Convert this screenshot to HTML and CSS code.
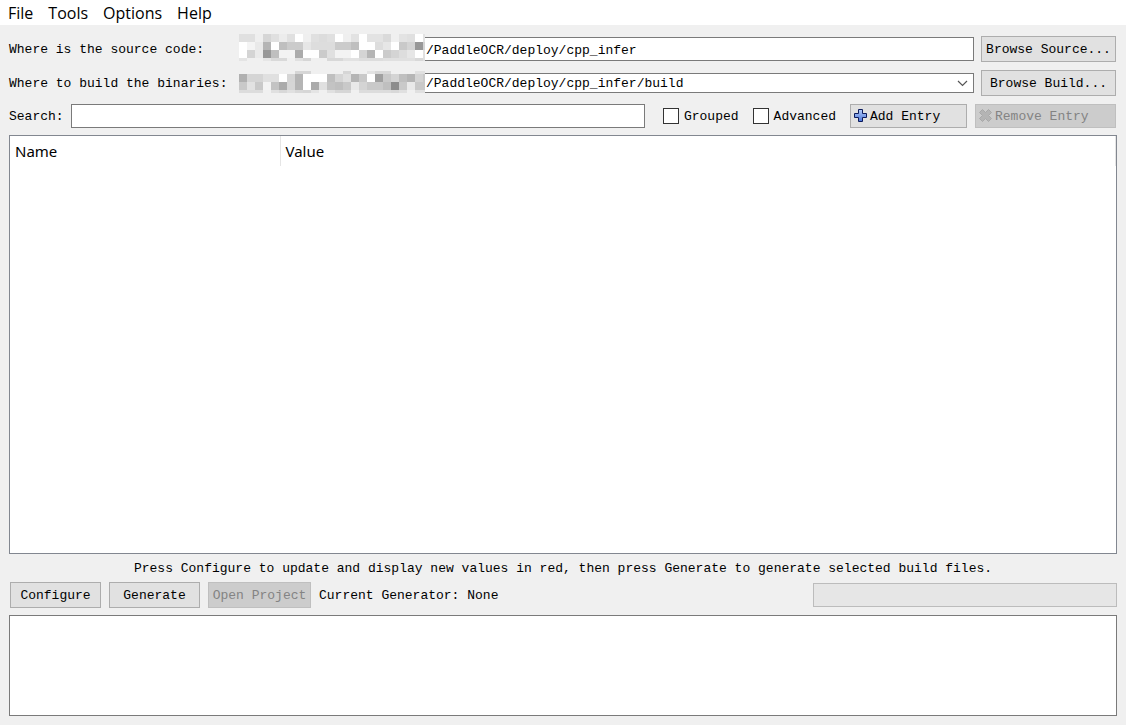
FILE: index.html
```
<!DOCTYPE html>
<html lang="en">
<head>
    <meta charset="UTF-8">
    <meta name="viewport" content="width=device-width, initial-scale=1.0">
    <title>CMake</title>
    <link rel="stylesheet" href="styles.css">
</head>
<body>
    <nav class="menubar">
        <button class="menu" type="button">File</button>
        <button class="menu" type="button">Tools</button>
        <button class="menu" type="button">Options</button>
        <button class="menu" type="button">Help</button>
    </nav>

    <main class="window">
        <div class="paths">
            <label for="source">Where is the source code:</label>
            <div class="field">
                <input class="path" id="source" type="text" value="/PaddleOCR/deploy/cpp_infer">
                <svg class="mosaic" id="sourceMosaic" width="186" height="27" viewBox="0 0 186 27" aria-hidden="true" shape-rendering="crispEdges"></svg>
            </div>
            <button class="btn" type="button">Browse Source...</button>

            <label for="build">Where to build the binaries:</label>
            <div class="field">
                <select class="path path-select" id="build">
                    <option>/PaddleOCR/deploy/cpp_infer/build</option>
                </select>
                <svg class="mosaic" id="buildMosaic" width="186" height="22" viewBox="0 0 186 22" aria-hidden="true" shape-rendering="crispEdges"></svg>
                <svg class="chevron" width="11" height="7" viewBox="0 0 11 7" aria-hidden="true">
                    <path d="M1 1l4.500 4.500L10 1" fill="none" stroke="#555" stroke-width="1.200"/>
                </svg>
            </div>
            <button class="btn" type="button">Browse Build...</button>
        </div>

        <div class="search-row">
            <label for="search">Search:</label>
            <input class="search" id="search" type="text">
            <label class="check"><input type="checkbox"><span>Grouped</span></label>
            <label class="check"><input type="checkbox"><span>Advanced</span></label>
            <button class="btn add" type="button">
                <svg width="14" height="14" viewBox="0 0 14 14" aria-hidden="true">
                    <defs>
                        <linearGradient id="plusFill" x1="0" y1="0" x2="0" y2="1">
                            <stop offset="0" stop-color="#b4cdfa"/>
                            <stop offset="1" stop-color="#4a74d8"/>
                        </linearGradient>
                    </defs>
                    <path d="M4.500.500h4v4h4v4h-4v4h-4v-4h-4v-4h4z" fill="url(#plusFill)" stroke="#0b1a5c"/>
                </svg>
                <span>Add Entry</span>
            </button>
            <button class="btn remove" type="button" disabled>
                <svg width="14" height="14" viewBox="0 0 14 14" aria-hidden="true">
                    <path d="M3.500.500l3 3 3-3 3 3-3 3 3 3-3 3-3-3-3 3-3-3 3-3-3-3z" fill="#b4b4b4" stroke="#a8a8a8" stroke-linejoin="round"/>
                </svg>
                <span>Remove Entry</span>
            </button>
        </div>

        <div class="cache">
            <table class="cache-table">
                <thead>
                    <tr><th class="col-name">Name</th><th>Value</th></tr>
                </thead>
                <tbody></tbody>
            </table>
        </div>

        <p class="hint">Press Configure to update and display new values in red, then press Generate to generate selected build files.</p>

        <div class="actions">
            <button class="btn action" type="button">Configure</button>
            <button class="btn action" type="button">Generate</button>
            <button class="btn open" type="button" disabled>Open Project</button>
            <span class="generator">Current Generator: None</span>
            <div class="progress" role="progressbar" aria-label="Progress"></div>
        </div>

        <textarea class="output" aria-label="Output" readonly></textarea>
    </main>

    <script>
        // each row: top, height, grey level of every 8px tile
        const sourceRows = [
            [0, 8, 'e0 e0 ef d6 e0 ec e0 ff ef e0 dc e0 ff ef e2 ff e3 e3 da f0 e3 e0 ff e3'],
            [8, 8, 'ff f4 e9 b5 ff bf cb cb e6 dd dd dd cb cb bf ff ff dd e6 ff c9 d4 98 d4'],
            [16, 8, 'ff d4 ea 98 bf f3 f3 ab ff ff cb e0 f3 f3 ff d4 b5 ff cb d4 dd e6 ff e0'],
            [24, 3, 'e4 f0 f0 e6 d9 d9 f0 e0 d6 f0 f0 d8 d8 e2 e2 dd dd dd e0 e0 e0 e0 d8 e0']
        ];
        const buildRows = [
            [0, 3, 'f0 f0 f0 f0 f0 f0 f0 d6 d6 f0 f0 f0 f0 d6 f0 f0 e3 d8 d8 f0 f0 f0 e0 e0'],
            [3, 8, 'b0 d5 d5 e0 e0 ff d5 b5 ff ff ff bf d5 e0 b5 c9 ff a0 c9 d4 bf b5 d4 c9'],
            [11, 8, 'c9 e2 c9 f3 c3 ab d6 b5 ff ab e0 c3 bf c9 e9 d4 c9 c9 bf 8c c9 e9 c9 c9'],
            [19, 3, 'dc dc dc f0 e0 d8 e0 d8 d6 e4 f0 e0 d6 d6 f0 dc dc dc dc d8 e0 f0 e0 e0']
        ];

        function drawMosaic(id, rows) {
            let tiles = '';
            rows.forEach(([top, height, greys]) => {
                greys.split(' ').forEach((g, i) => {
                    tiles += `<rect x="${i * 8}" y="${top}" width="8" height="${height}" fill="#${g}${g}${g}"/>`;
                });
            });
            document.getElementById(id).innerHTML = tiles;
        }

        drawMosaic('sourceMosaic', sourceRows);
        drawMosaic('buildMosaic', buildRows);
    </script>
</body>
</html>
```
FILE: styles.css
```
:root {
    --window-color: #f0f0f0;
    --border-color: #7a7a7a;
    --button-color: #e1e1e1;
    --button-border: #adadad;
}

* {
    box-sizing: border-box;
}

body {
    margin: 0;
    min-height: 100vh;
    display: flex;
    flex-direction: column;
    background-color: var(--window-color);
    color: #000;
    font-family: "Liberation Mono", monospace;
    font-size: 13px;
    line-height: 16px;
}

button, input, select, textarea {
    margin: 0;
    font: inherit;
    color: inherit;
    border-radius: 0;
}

.menubar {
    display: flex;
    gap: 15px;
    height: 25px;
    padding: 0 8px;
    background-color: #fff;
}

.menu {
    padding: 0;
    border: none;
    background: none;
    font-family: "Open Sans", sans-serif;
    font-size: 16px;
}

.window {
    flex: 1;
    display: flex;
    flex-direction: column;
    padding: 11px 9px 9px;
}

.paths {
    display: grid;
    grid-template-columns: 230px 1fr 135px;
    row-gap: 8px;
    align-items: center;
    padding-right: 1px;
}

.paths label, .search-row > label, .generator {
    padding-top: 2px;
}

.field {
    position: relative;
    display: flex;
    margin-right: 7px;
}

.path {
    width: 100%;
    height: 24px;
    padding: 2px 0 0 186px;
    border: 1px solid var(--border-color);
    background-color: #fff;
}

.path-select {
    height: 20px;
    appearance: none;
}

/* covers the private part of the path */
.mosaic {
    position: absolute;
    left: 0;
    bottom: 0;
}

.chevron {
    position: absolute;
    right: 6px;
    top: 7px;
}

.btn {
    height: 26px;
    padding: 2px 0 0;
    border: 1px solid var(--button-border);
    background-color: var(--button-color);
    white-space: nowrap;
}

.btn:disabled {
    border-color: #bfbfbf;
    background-color: #ccc;
    color: #838383;
}

.search-row {
    display: flex;
    align-items: center;
    margin-top: 8px;
    padding-right: 1px;
}

.search {
    flex: 1;
    min-width: 0;
    height: 24px;
    margin: 0 18px 0 7px;
    border: 1px solid var(--border-color);
    background-color: #fff;
}

.search-row > .check {
    display: flex;
    align-items: center;
    gap: 5px;
    margin-right: 14px;
    padding: 0;
}

.check input {
    appearance: none;
    width: 16px;
    height: 16px;
    border: 1px solid #333;
    background-color: #fff;
}

.check input:checked {
    background-color: #333;
}

.check span, .btn span {
    padding-top: 2px;
}

.add, .remove {
    display: flex;
    align-items: center;
    gap: 2px;
    height: 24px;
    padding: 0 3px;
}

.add {
    width: 117px;
    margin-right: 8px;
}

.remove {
    width: 141px;
}

.cache {
    flex: 1;
    margin-top: 7px;
    border: 1px solid #828790;
    background-color: #fff;
}

.cache-table {
    width: 100%;
    border-collapse: collapse;
    table-layout: fixed;
    font-family: "Noto Sans", sans-serif;
    font-size: 15px;
}

.cache-table th {
    height: 30px;
    padding: 0 5px;
    border-right: 1px solid #e5e5e5;
    font-weight: 400;
    text-align: left;
}

.cache-table .col-name {
    width: 270px;
}

.hint {
    margin: 7px 0 5px;
    text-align: center;
}

.actions {
    display: flex;
    align-items: center;
    gap: 8px;
    padding-left: 1px;
}

.action {
    width: 91px;
}

.open {
    width: 103px;
}

.progress {
    width: 304px;
    height: 24px;
    margin-left: auto;
    border: 1px solid #bcbcbc;
    background-color: #e6e6e6;
}

.output {
    height: 101px;
    margin-top: 7px;
    border: 1px solid var(--border-color);
    background-color: #fff;
    resize: none;
}
```
